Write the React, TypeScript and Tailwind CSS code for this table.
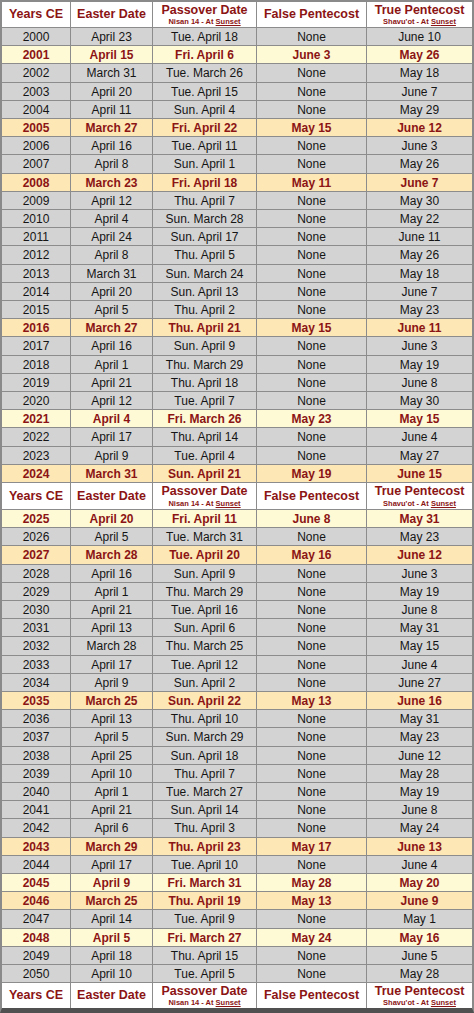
import React from "react";

type Row = {
  year: string;
  easter: string;
  passover: string;
  falsePent: string;
  truePent: string;
  hl?: "pale" | "orange";
};

const r = (
  year: number,
  easter: string,
  passover: string,
  falsePent: string,
  truePent: string,
  hl?: "pale" | "orange"
): Row => ({ year: String(year), easter, passover, falsePent, truePent, hl });

const firstBlock: Row[] = [
  r(2000, "April 23", "Tue. April 18", "None", "June 10"),
  r(2001, "April 15", "Fri. April 6", "June 3", "May 26", "pale"),
  r(2002, "March 31", "Tue. March 26", "None", "May 18"),
  r(2003, "April 20", "Tue. April 15", "None", "June 7"),
  r(2004, "April 11", "Sun. April 4", "None", "May 29"),
  r(2005, "March 27", "Fri. April 22", "May 15", "June 12", "orange"),
  r(2006, "April 16", "Tue. April 11", "None", "June 3"),
  r(2007, "April 8", "Sun. April 1", "None", "May 26"),
  r(2008, "March 23", "Fri. April 18", "May 11", "June 7", "orange"),
  r(2009, "April 12", "Thu. April 7", "None", "May 30"),
  r(2010, "April 4", "Sun. March 28", "None", "May 22"),
  r(2011, "April 24", "Sun. April 17", "None", "June 11"),
  r(2012, "April 8", "Thu. April 5", "None", "May 26"),
  r(2013, "March 31", "Sun. March 24", "None", "May 18"),
  r(2014, "April 20", "Sun. April 13", "None", "June 7"),
  r(2015, "April 5", "Thu. April 2", "None", "May 23"),
  r(2016, "March 27", "Thu. April 21", "May 15", "June 11", "orange"),
  r(2017, "April 16", "Sun. April 9", "None", "June 3"),
  r(2018, "April 1", "Thu. March 29", "None", "May 19"),
  r(2019, "April 21", "Thu. April 18", "None", "June 8"),
  r(2020, "April 12", "Tue. April 7", "None", "May 30"),
  r(2021, "April 4", "Fri. March 26", "May 23", "May 15", "pale"),
  r(2022, "April 17", "Thu. April 14", "None", "June 4"),
  r(2023, "April 9", "Tue. April 4", "None", "May 27"),
  r(2024, "March 31", "Sun. April 21", "May 19", "June 15", "orange"),
];

const secondBlock: Row[] = [
  r(2025, "April 20", "Fri. April 11", "June 8", "May 31", "pale"),
  r(2026, "April 5", "Tue. March 31", "None", "May 23"),
  r(2027, "March 28", "Tue. April 20", "May 16", "June 12", "orange"),
  r(2028, "April 16", "Sun. April 9", "None", "June 3"),
  r(2029, "April 1", "Thu. March 29", "None", "May 19"),
  r(2030, "April 21", "Tue. April 16", "None", "June 8"),
  r(2031, "April 13", "Sun. April 6", "None", "May 31"),
  r(2032, "March 28", "Thu. March 25", "None", "May 15"),
  r(2033, "April 17", "Tue. April 12", "None", "June 4"),
  r(2034, "April 9", "Sun. April 2", "None", "June 27"),
  r(2035, "March 25", "Sun. April 22", "May 13", "June 16", "orange"),
  r(2036, "April 13", "Thu. April 10", "None", "May 31"),
  r(2037, "April 5", "Sun. March 29", "None", "May 23"),
  r(2038, "April 25", "Sun. April 18", "None", "June 12"),
  r(2039, "April 10", "Thu. April 7", "None", "May 28"),
  r(2040, "April 1", "Tue. March 27", "None", "May 19"),
  r(2041, "April 21", "Sun. April 14", "None", "June 8"),
  r(2042, "April 6", "Thu. April 3", "None", "May 24"),
  r(2043, "March 29", "Thu. April 23", "May 17", "June 13", "orange"),
  r(2044, "April 17", "Tue. April 10", "None", "June 4"),
  r(2045, "April 9", "Fri. March 31", "May 28", "May 20", "pale"),
  r(2046, "March 25", "Thu. April 19", "May 13", "June 9", "orange"),
  r(2047, "April 14", "Tue. April 9", "None", "May 1"),
  r(2048, "April 5", "Fri. March 27", "May 24", "May 16", "pale"),
  r(2049, "April 18", "Thu. April 15", "None", "June 5"),
  r(2050, "April 10", "Tue. April 5", "None", "May 28"),
];

const cols = "grid grid-cols-[68px_81px_103px_109px_1fr] grid-rows-[100%] gap-px";

const HeaderRow = ({ tall }: { tall?: boolean }) => (
  <div className={`${cols} ${tall ? "h-[26px]" : "h-[25px]"}`}>
    <div className="bg-white flex items-center justify-center text-[12.5px] leading-none font-bold text-[#8b1414]">
      Years CE
    </div>
    <div className="bg-white flex items-center justify-center text-[12.5px] leading-none font-bold text-[#8b1414]">
      Easter Date
    </div>
    <div className="bg-white flex flex-col items-center justify-center text-[#8b1414] leading-none">
      <span className="text-[12.5px] font-bold">Passover Date</span>
      <span className="text-[7.5px] font-bold mt-[2px]">
        Nisan 14 - At <span className="underline">Sunset</span>
      </span>
    </div>
    <div className="bg-white flex items-center justify-center text-[12.5px] leading-none font-bold text-[#8b1414]">
      False Pentecost
    </div>
    <div className="bg-white flex flex-col items-center justify-center text-[#8b1414] leading-none">
      <span className="text-[12.5px] font-bold">True Pentecost</span>
      <span className="text-[7.5px] font-bold mt-[2px]">
        Shavu'ot - At <span className="underline">Sunset</span>
      </span>
    </div>
  </div>
);

const DataRow = ({ row, tall }: { row: Row; tall: boolean }) => {
  const bg =
    row.hl === "pale"
      ? "bg-[#fffad6]"
      : row.hl === "orange"
      ? "bg-[#fde7b4]"
      : "bg-[#d3d3d3]";
  const txt = row.hl ? "font-bold text-[#8b1414]" : "text-[#151515]";
  const cell = `${bg} ${txt} flex items-center justify-center text-[12px] leading-none`;
  return (
    <div className={`${cols} ${tall ? "h-[18px]" : "h-[17px]"}`}>
      <div className={cell}>{row.year}</div>
      <div className={cell}>{row.easter}</div>
      <div className={cell}>{row.passover}</div>
      <div className={cell}>{row.falsePent}</div>
      <div className={cell}>{row.truePent}</div>
    </div>
  );
};

export default function App() {
  return (
    <div
      className="w-[474px] h-[1013px] overflow-hidden bg-[#8c8c8c] border-t-2 border-x-2 border-b-[5px] border-t-[#8a8a8a] border-x-[#8a8a8a] border-b-[#505050]"
      style={{ fontFamily: '"Liberation Sans", Arial, sans-serif' }}
    >
      <div className="flex flex-col gap-px">
        <HeaderRow />
        {firstBlock.map((row, i) => (
          <DataRow key={row.year} row={row} tall={i % 5 === 2} />
        ))}
        <HeaderRow tall />
        {secondBlock.map((row, i) => (
          <DataRow key={row.year} row={row} tall={i % 5 === 2} />
        ))}
        <HeaderRow />
      </div>
    </div>
  );
}
